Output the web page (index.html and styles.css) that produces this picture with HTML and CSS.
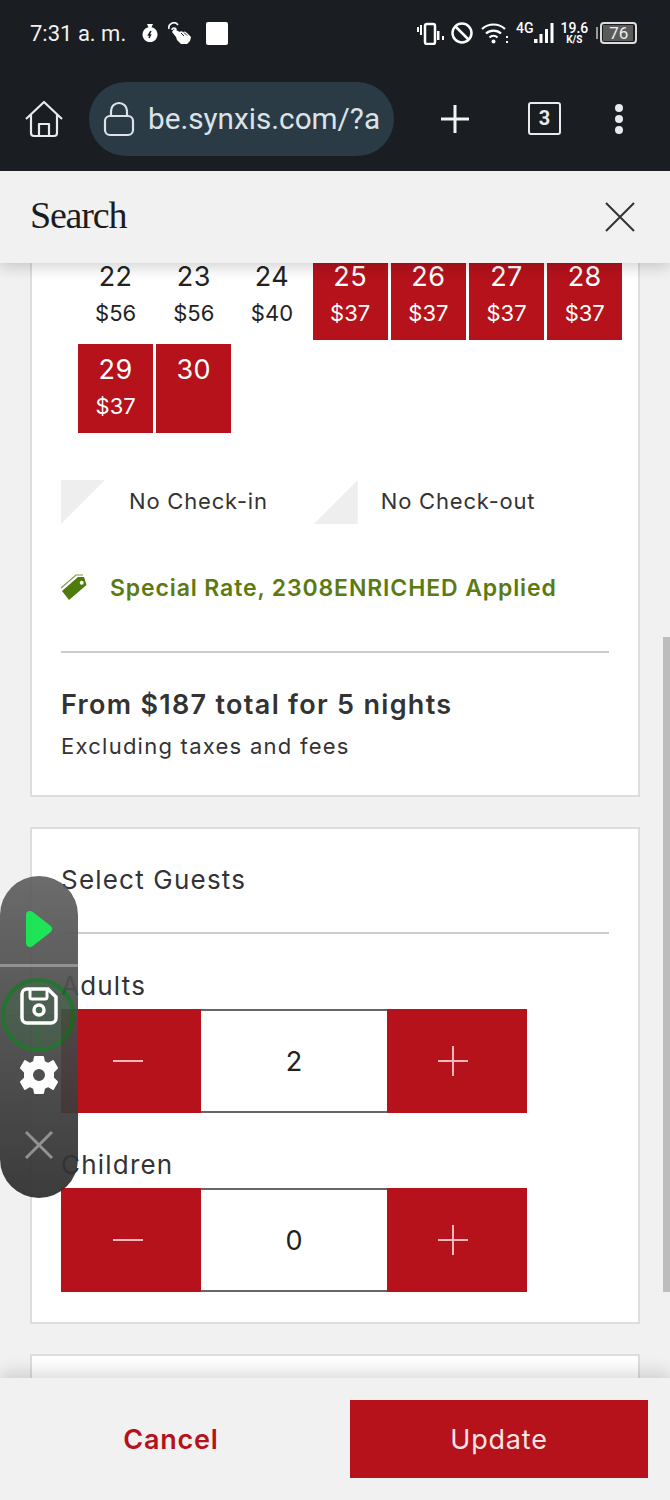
FILE: index.html
```html
<!DOCTYPE html>
<html lang="en">
<head>
  <meta charset="UTF-8">
  <meta name="viewport" content="width=device-width, initial-scale=1.0">
  <title>Search</title>
  <link rel="stylesheet" href="styles.css">
</head>
<body>
  <!-- phone status bar -->
  <div class="status-bar">
    <span class="clock">7:31 a. m.</span>
    <svg class="st-icon" width="20" height="22" viewBox="0 0 20 22"><path d="M7 2h6l-1.500 3.200a7.500 7.500 0 1 1-3 0z" fill="#fff"/><path d="M11 9l-2.500 4h2l-1.500 3" stroke="#1a1d21" stroke-width="1.500" fill="none"/></svg>
    <svg class="st-icon hand" width="26" height="22" viewBox="0 0 26 22"><path d="M1 7a5 5 0 0 1 9-4" stroke="#fff" stroke-width="1.500" fill="none"/><path d="M4 8a2 2 0 0 1 4 0" stroke="#fff" stroke-width="1.500" fill="none"/><path d="M6 7l6 3 1-1 2 1 2-.5 2 1.500 4 4-1 4-3 3h-6l-4-4-1-3-4-5z" fill="#fff"/><path d="M13 11l3 3M16 10.500l3 3" stroke="#1a1d21" stroke-width="1"/></svg>
    <span class="white-square"></span>
    <div class="status-right">
      <svg class="vib" width="28" height="24" viewBox="0 0 28 24"><g fill="#fff"><rect x="0" y="6" width="2" height="5"/><rect x="3" y="4" width="2" height="10"/><rect x="20" y="10" width="2.500" height="9"/><rect x="25" y="15" width="2" height="4"/></g><rect x="8" y="3" width="10" height="20" rx="2" fill="none" stroke="#fff" stroke-width="2.500"/></svg>
      <svg width="24" height="24" viewBox="0 0 24 24"><circle cx="12" cy="12" r="9.500" fill="none" stroke="#fff" stroke-width="2.500"/><path d="M5 5l14 14" stroke="#fff" stroke-width="2.500"/></svg>
      <svg class="wifi" width="28" height="24" viewBox="0 0 28 24"><g fill="none" stroke="#fff" stroke-width="2.200"><path d="M1 8a17 17 0 0 1 23 0"/><path d="M5 12.500a11 11 0 0 1 15 0"/><path d="M8.500 16.500a6 6 0 0 1 8 0"/></g><circle cx="12.500" cy="20.500" r="2" fill="#fff"/><rect x="25" y="15" width="2" height="2" fill="#fff"/><rect x="25" y="20" width="2" height="2" fill="#fff"/></svg>
      <span class="net">4G</span>
      <svg width="20" height="24" viewBox="0 0 20 24"><g fill="#fff"><rect x="0" y="18" width="3.500" height="4"/><rect x="5.500" y="13" width="3" height="9"/><rect x="11" y="8" width="3" height="14"/><rect x="16.500" y="2" width="3" height="20"/></g></svg>
      <span class="speed">19.6<small>K/S</small></span>
      <span class="battery-nub"></span>
      <span class="battery"><span class="battery-fill"></span><span class="battery-num">76</span></span>
    </div>
  </div>

  <!-- browser toolbar -->
  <div class="browser-bar">
    <svg class="home" width="40" height="40" viewBox="0 0 40 40"><path d="M2 20L20 3l18 17M7 16v18a3 3 0 0 0 3 3h20a3 3 0 0 0 3-3V16M15 37V25h10v12" fill="none" stroke="#e8eaed" stroke-width="2.200" stroke-linejoin="round"/></svg>
    <div class="url-pill">
      <svg width="32" height="36" viewBox="0 0 32 36"><path d="M8 15V10a8 8 0 0 1 16 0v5" fill="none" stroke="#dbe2e8" stroke-width="2.200"/><rect x="2" y="15" width="28" height="19" rx="5" fill="none" stroke="#dbe2e8" stroke-width="2.200"/></svg>
      <span class="url-text">be.synxis.com/?a</span>
    </div>
    <svg class="plus-tab" width="32" height="32" viewBox="0 0 32 32"><path d="M16 2v28M2 16h28" stroke="#f1f3f4" stroke-width="3"/></svg>
    <span class="tab-count">3</span>
    <div class="dots"><i></i><i></i><i></i></div>
  </div>

  <header class="search-head">
    <h1>Search</h1>
    <svg width="32" height="32" viewBox="0 0 32 32"><path d="M2 2l28 28M30 2L2 30" stroke="#333" stroke-width="2"/></svg>
  </header>

  <main class="content">
    <section class="card calendar-card">
      <div class="days">
        <div class="day"><span class="num">22</span><span class="price">$56</span></div>
        <div class="day"><span class="num">23</span><span class="price">$56</span></div>
        <div class="day"><span class="num">24</span><span class="price">$40</span></div>
        <div class="day picked"><span class="num">25</span><span class="price">$37</span></div>
        <div class="day picked"><span class="num">26</span><span class="price">$37</span></div>
        <div class="day picked"><span class="num">27</span><span class="price">$37</span></div>
        <div class="day picked"><span class="num">28</span><span class="price">$37</span></div>
        <div class="day picked"><span class="num">29</span><span class="price">$37</span></div>
        <div class="day picked"><span class="num">30</span></div>
      </div>

      <div class="legend">
        <span class="tri tri-in"></span>
        <span class="legend-label first">No Check-in</span>
        <span class="tri tri-out"></span>
        <span class="legend-label">No Check-out</span>
      </div>

      <div class="rate">
        <svg width="28" height="28" viewBox="0 0 28 28"><path fill-rule="evenodd" d="M18 3h6l2.500 8L9 26l-7-9zM21.700 6.700a2 2 0 1 0 0 4 2 2 0 0 0 0-4z" fill="#4f7a0c"/><path d="M1 14L16 1h7" fill="none" stroke="#7d9a4a" stroke-width="1.200"/></svg>
        <span>Special Rate, 2308ENRICHED Applied</span>
      </div>

      <div class="total">
        <p class="total-main">From $187 total for 5 nights</p>
        <p class="total-sub">Excluding taxes and fees</p>
      </div>
    </section>

    <section class="card guests-card">
      <h2>Select Guests</h2>
      <label class="step-label">Adults</label>
      <div class="stepper">
        <button class="step-btn minus"><svg width="30" height="30" viewBox="0 0 30 30"><path d="M0 15h30" stroke="#f3b9bd" stroke-width="2"/></svg></button>
        <span class="step-val">2</span>
        <button class="step-btn plus"><svg width="30" height="30" viewBox="0 0 30 30"><path d="M0 15h30M15 0v30" stroke="#f3b9bd" stroke-width="2"/></svg></button>
      </div>
      <label class="step-label">Children</label>
      <div class="stepper">
        <button class="step-btn minus"><svg width="30" height="30" viewBox="0 0 30 30"><path d="M0 15h30" stroke="#f3b9bd" stroke-width="2"/></svg></button>
        <span class="step-val">0</span>
        <button class="step-btn plus"><svg width="30" height="30" viewBox="0 0 30 30"><path d="M0 15h30M15 0v30" stroke="#f3b9bd" stroke-width="2"/></svg></button>
      </div>
    </section>

    <section class="card next-card"></section>
  </main>

  <footer class="actions">
    <button class="cancel-btn">Cancel</button>
    <button class="update-btn">Update</button>
  </footer>

  <div class="scrollbar"></div>

  <!-- floating recorder widget, sits over the page -->
  <div class="widget">
    <div class="widget-top">
      <svg width="28" height="38" viewBox="0 0 28 38"><path d="M5 5l18 14L5 33z" fill="#0fe34b" stroke="#0fe34b" stroke-width="8" stroke-linejoin="round"/></svg>
    </div>
    <div class="widget-rest">
      <span class="crosshair"></span>
      <svg class="w-save" width="38" height="38" viewBox="0 0 38 38"><path d="M7 2h21l8 8v21a5 5 0 0 1-5 5H7a5 5 0 0 1-5-5V7a5 5 0 0 1 5-5z" fill="none" stroke="#fff" stroke-width="3.500"/><path d="M10 3v7a2 2 0 0 0 2 2h13a2 2 0 0 0 2-2V3" fill="none" stroke="#fff" stroke-width="3"/><circle cx="19" cy="23" r="5" fill="none" stroke="#fff" stroke-width="3.500"/></svg>
      <svg class="w-gear" width="40" height="40" viewBox="0 0 40 40"><path fill="#fff" stroke="#fff" stroke-width="2" stroke-linejoin="round" fill-rule="evenodd" d="M16 2h8l1 5 4 2 5-3 4 7-4 4v6l4 4-4 7-5-3-4 2-1 5h-8l-1-5-4-2-5 3-4-7 4-4v-6l-4-4 4-7 5 3 4-2zM20 13a7 7 0 1 0 0 14 7 7 0 0 0 0-14z"/></svg>
      <svg class="w-close" width="30" height="30" viewBox="0 0 30 30"><path d="M2 2l26 26M28 2L2 28" stroke="#8a8a8a" stroke-width="3"/></svg>
    </div>
  </div>
</body>
</html>
```

FILE: styles.css
```css
* {
  box-sizing: border-box;
}
html, body {
  margin: 0;
  padding: 0;
}
body {
  position: relative;
  width: 670px;
  height: 1500px;
  overflow: hidden;
  display: flex;
  flex-direction: column;
  font-family: Inter, "Liberation Sans", sans-serif;
  background-color: #f1f1f1;
  color: #333;
}

/* status bar */
.status-bar {
  position: relative;
  z-index: 4;
  height: 66px;
  padding: 0 0 0 30px;
  display: flex;
  align-items: center;
  background-color: #1a1d21;
  color: #fff;
  flex-shrink: 0;
}
.clock {
  font-family: Roboto, sans-serif;
  font-size: 22px;
  width: 110px;
  color: #f2f2f2;
}
.st-icon {
  margin-right: 8px;
}
.white-square {
  width: 22px;
  height: 23px;
  margin-left: 4px;
  background-color: #fff;
  border-radius: 2px;
}
.status-right {
  margin-left: auto;
  width: 254px;
  padding-left: 1px;
  display: flex;
  align-items: center;
  gap: 0;
}
.vib {
  margin-right: 5px;
}
.wifi {
  margin-left: 7px;
}
.net {
  font-family: Roboto, sans-serif;
  font-size: 14px;
  font-weight: 500;
  margin: -10px 0 0 7px;
}
.speed {
  font-family: Roboto, sans-serif;
  font-size: 14px;
  line-height: 13px;
  font-weight: 500;
  text-align: center;
  margin-left: 7px;
  display: flex;
  flex-direction: column;
}
.speed small {
  font-size: 10px;
  line-height: 9px;
  font-weight: 700;
}
.battery-nub {
  width: 2px;
  height: 12px;
  margin-left: 8px;
  background-color: #999;
}
.battery {
  position: relative;
  width: 37px;
  height: 22px;
  margin-left: 2px;
  border: 2px solid #ddd;
  border-radius: 4px;
}
.battery-fill {
  position: absolute;
  left: 1px;
  top: 1px;
  bottom: 1px;
  width: 30px;
  background-color: #5a5a5a;
}
.battery-num {
  position: absolute;
  left: 7px;
  top: 0;
  font-family: Roboto, sans-serif;
  font-size: 17px;
  line-height: 18px;
  color: #eee;
}

/* browser toolbar */
.browser-bar {
  position: relative;
  z-index: 4;
  height: 105px;
  padding: 0 0 0 24px;
  display: flex;
  align-items: center;
  background-color: #1a1d21;
  flex-shrink: 0;
}
.url-pill {
  width: 305px;
  height: 74px;
  margin-left: 25px;
  margin-right: 45px;
  padding-left: 14px;
  display: flex;
  align-items: center;
  gap: 13px;
  background-color: #2a3b45;
  border-radius: 37px;
}
.url-text {
  font-family: Roboto, sans-serif;
  font-size: 29.700px;
  color: #dbe2e8;
  white-space: nowrap;
}
.tab-count {
  width: 33px;
  height: 33px;
  margin-left: 57px;
  border: 2px solid #e8eaed;
  border-radius: 3px;
  font-family: Roboto, sans-serif;
  font-size: 20px;
  font-weight: 700;
  line-height: 29px;
  text-align: center;
  color: #e8eaed;
}
.dots {
  margin-left: 54px;
  display: flex;
  flex-direction: column;
  gap: 3px;
}
.dots i {
  display: block;
  width: 8px;
  height: 8px;
  border-radius: 50%;
  background-color: #e8eaed;
}

/* search header */
.search-head {
  position: relative;
  z-index: 3;
  height: 92px;
  padding: 0 34px 0 30px;
  display: flex;
  align-items: center;
  justify-content: space-between;
  background-color: #f1f1f1;
  box-shadow: 0 4px 14px rgba(0,0,0,0.18);
  flex-shrink: 0;
}
.search-head h1 {
  margin: 0 0 4px;
  font-family: "Liberation Serif", serif;
  font-size: 38px;
  font-weight: 400;
  letter-spacing: -1.200px;
  color: #1c1c1c;
}

/* main area, the first card runs up under the header */
.content {
  flex: 1;
  min-height: 0;
  padding: 0 30px;
}
.card {
  background-color: #fff;
  border: 2px solid #ddd;
  padding: 0 29px;
  margin-bottom: 30px;
}
.calendar-card {
  height: 546px;
  margin-top: -12px;
  border-top: none;
}
.days {
  display: grid;
  grid-template-columns: repeat(7, 75.200px);
  grid-auto-rows: 89px;
  column-gap: 3px;
  row-gap: 4px;
  margin-left: 17px;
}
.day {
  display: flex;
  flex-direction: column;
  align-items: center;
  color: #222;
}
.day.picked {
  background-color: #b5121b;
  color: #fff;
}
.num {
  margin-top: 13px;
  font-size: 27px;
  line-height: 26px;
  letter-spacing: 0.500px;
}
.price {
  margin-top: 7px;
  font-size: 22px;
  line-height: 32px;
}
.legend {
  margin-top: 47px;
  height: 44px;
  display: flex;
  align-items: center;
}
.tri {
  width: 44px;
  height: 44px;
  background-color: #eeeeee;
}
.tri-in {
  clip-path: polygon(0 0, 100% 0, 0 100%);
}
.tri-out {
  clip-path: polygon(100% 0, 100% 100%, 0 100%);
}
.legend-label {
  margin-bottom: 2px;
  margin-left: 23px;
  font-size: 22px;
  letter-spacing: 0.800px;
  color: #333;
}
.legend-label.first {
  margin-left: 24px;
  margin-right: 46px;
}
.rate {
  margin-top: 50px;
  height: 28px;
  display: flex;
  align-items: center;
  gap: 22px;
  font-size: 23px;
  font-weight: 600;
  letter-spacing: 0.870px;
  color: #5b7a12;
}
.rate svg {
  margin-left: -1px;
}
.total {
  margin-top: 49px;
  padding-top: 32px;
  border-top: 2px solid #ccc;
}
.total p {
  margin: 0;
}
.total-main {
  font-size: 27px;
  line-height: 40px;
  font-weight: 600;
  letter-spacing: 1.300px;
}
.total-sub {
  padding-top: 6px;
  font-size: 22px;
  line-height: 30px;
  letter-spacing: 1.250px;
}

/* guests */
.guests-card {
  height: 497px;
}
.guests-card h2 {
  margin: 0;
  height: 105px;
  padding-top: 31px;
  border-bottom: 2px solid #ccc;
  font-size: 26px;
  line-height: 40px;
  font-weight: 400;
  letter-spacing: 1.200px;
}
.step-label {
  display: block;
  margin-top: 32px;
  font-size: 26px;
  line-height: 40px;
  letter-spacing: 1.200px;
}
.stepper {
  width: 466px;
  height: 104px;
  margin-top: 3px;
  display: flex;
}
.step-btn {
  width: 140px;
  border: none;
  padding: 0;
  display: flex;
  align-items: center;
  justify-content: center;
  background-color: #b5121b;
}
.step-btn.minus {
  padding-right: 6px;
}
.step-btn.plus {
  padding-right: 8px;
}
.step-val {
  flex: 1;
  display: flex;
  align-items: center;
  justify-content: center;
  border-top: 2px solid #666;
  border-bottom: 2px solid #666;
  font-size: 27px;
  color: #222;
}
.next-card {
  height: 100px;
}

/* bottom actions */
.actions {
  position: relative;
  z-index: 3;
  height: 122px;
  padding: 22px 22px 22px 0;
  display: flex;
  background-color: #f1f1f1;
  box-shadow: 0 -6px 16px rgba(0,0,0,0.14);
  flex-shrink: 0;
}
.cancel-btn, .update-btn {
  border: none;
  font-family: Inter, "Liberation Sans", sans-serif;
  font-size: 27px;
  letter-spacing: 0.800px;
}
.cancel-btn {
  width: 342px;
  background: none;
  font-weight: 600;
  color: #b5121b;
}
.update-btn {
  margin-left: 8px;
  flex: 1;
  background-color: #b5121b;
  color: #f8e4e4;
}

.scrollbar {
  position: absolute;
  z-index: 2;
  right: 0;
  top: 637px;
  width: 7px;
  height: 655px;
  background-color: #bdbdbd;
}

/* floating widget */
.widget {
  position: absolute;
  z-index: 5;
  left: 0;
  top: 876px;
  width: 78px;
  height: 322px;
  border-radius: 39px;
  overflow: hidden;
  background: linear-gradient(#616161, #2e2e2e);
  opacity: 0.93;
}
.widget-top {
  height: 91px;
  padding-top: 34px;
  padding-left: 25px;
  border-bottom: 3px solid #8a8a8a;
}
.widget-rest {
  position: relative;
  height: 231px;
}
.crosshair {
  position: absolute;
  left: 1px;
  top: 11px;
  width: 74px;
  height: 74px;
  border: 4px solid #166a22;
  border-radius: 50%;
  background-color: rgba(26,106,42,0.25);
}
.crosshair::before,
.crosshair::after {
  content: "";
  position: absolute;
  background-color: rgba(22,106,34,0.7);
}
.crosshair::before {
  left: 0;
  right: 0;
  top: 33px;
  height: 1px;
}
.crosshair::after {
  top: 0;
  bottom: 0;
  left: 33px;
  width: 1px;
}
.w-save {
  position: absolute;
  left: 20px;
  top: 20px;
}
.w-gear {
  position: absolute;
  left: 19px;
  top: 88px;
}
.w-close {
  position: absolute;
  left: 24px;
  top: 163px;
}
```
